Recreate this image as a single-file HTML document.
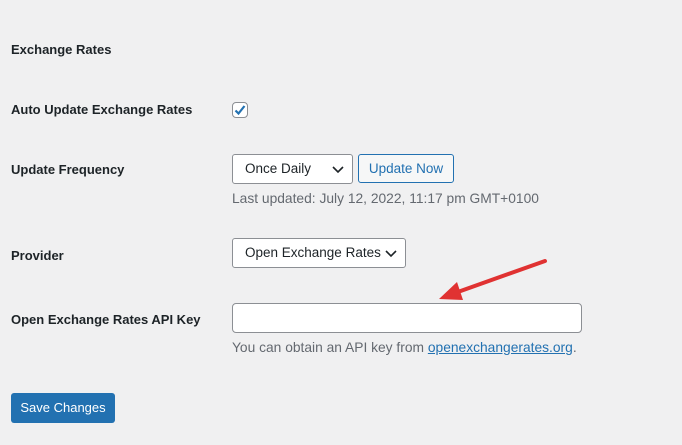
<!DOCTYPE html>
<html><head><style>
body{margin:0;width:682px;height:445px;background:#f0f0f1;font-family:"Liberation Sans",sans-serif;font-size:13px;color:#1d2327;position:relative;overflow:hidden}
.a{position:absolute;white-space:nowrap}
.l{font-weight:bold;font-size:13px}
.sel{position:absolute;background:#fff;border:1px solid #8c8f94;border-radius:3px;box-sizing:border-box;font-size:13.5px;padding-left:12px;line-height:28px}
.sel svg{position:absolute;right:8px;top:10px}
.m{color:#646970;font-size:13.8px}
</style></head><body>
<div class="a l" style="left:11px;top:42px">Exchange Rates</div>
<div class="a l" style="left:11px;top:102px">Auto Update Exchange Rates</div>
<div class="a l" style="left:11px;top:162px">Update Frequency</div>
<div class="a l" style="left:11px;top:248px">Provider</div>
<div class="a l" style="left:11px;top:312px">Open Exchange Rates API Key</div>

<div class="a" style="left:232px;top:102px;width:14px;height:14px;border:1px solid #8c8f94;border-radius:4px;background:#fff">
<svg width="14" height="14" viewBox="0 0 14 14"><path d="M2.5 7.5 L5.5 10.5 L11.5 3" stroke="#2271b1" stroke-width="2.2" fill="none"/></svg></div>

<div class="sel" style="left:232px;top:154px;width:121px;height:30px">Once Daily<svg width="12" height="10"><path d="M1 2 L6 7 L11 2" stroke="#1d2327" stroke-width="1.6" fill="none"/></svg></div>
<div class="a" style="left:358px;top:154px;width:96px;height:29px;box-sizing:border-box;border:1px solid #2271b1;border-radius:3px;background:#f6f7f7;color:#2271b1;font-size:13.5px;text-align:center;line-height:27px">Update Now</div>
<div class="a m" style="left:232px;top:191px">Last updated: July 12, 2022, 11:17 pm GMT+0100</div>

<div class="sel" style="left:232px;top:238px;width:174px;height:30px">Open Exchange Rates<svg width="12" height="10"><path d="M1 2 L6 7 L11 2" stroke="#1d2327" stroke-width="1.6" fill="none"/></svg></div>

<div class="a" style="left:232px;top:303px;width:350px;height:30px;box-sizing:border-box;border:1px solid #8c8f94;border-radius:4px;background:#fff"></div>
<div class="a m" style="left:232px;top:340px">You can obtain an API key from <span style="color:#2271b1;text-decoration:underline">openexchangerates.org</span>.</div>

<svg class="a" style="left:0;top:0" width="682" height="445"><line x1="545" y1="261" x2="455" y2="293" stroke="#e03232" stroke-width="4" stroke-linecap="round"/><path d="M439 299 L457 282 L463 300 Z" fill="#e03232"/></svg>

<div class="a" style="left:11px;top:393px;width:104px;height:30px;background:#2271b1;border-radius:3px;color:#fff;text-align:center;line-height:30px;font-size:13px">Save Changes</div>
</body></html>
